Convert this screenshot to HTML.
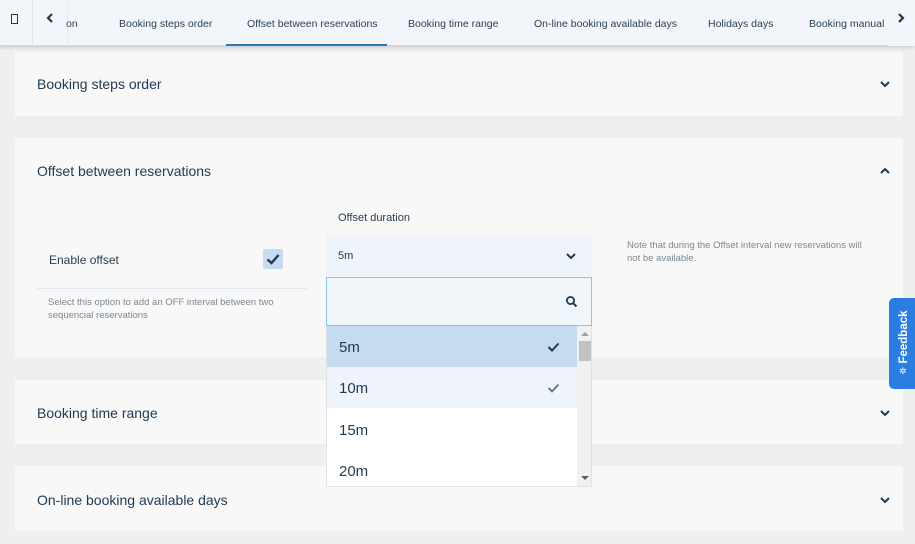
<!DOCTYPE html>
<html><head><style>
*{box-sizing:border-box;margin:0;padding:0}
body{width:915px;height:544px;overflow:hidden;background:#eeeff1;font-family:"Liberation Sans","DejaVu Sans",sans-serif;color:#1f3a52;position:relative}
.top{position:absolute;left:0;top:0;width:915px;height:46px;background:#f2f6fa;border-bottom:1px solid #cfd6dd;box-shadow:0 2px 3px rgba(0,0,0,.12)}
.tab{position:absolute;top:18px;font-size:10.5px;color:#2b3f52;white-space:nowrap}
.card{position:absolute;left:15px;width:888px;background:#f8f8f8}
.card h3{position:absolute;left:22px;font-weight:normal;font-size:14px;color:#1f3a52}
.chev{position:absolute;right:12px;width:12px;height:12px}
.dd{position:absolute;left:326px;width:266px}
.item{position:absolute;left:0;width:250px;height:41px;font-size:15px;padding:13px 0 0 12px;color:#1f3a52}
</style></head><body>
<div class="top">
 <div style="position:absolute;left:0;top:0;width:33px;height:46px;border-right:1px solid #e0e6ec"></div>
 <div style="position:absolute;left:11px;top:14px;width:7px;height:10px;border:1.5px solid #1f3a52"></div>
 <div style="position:absolute;left:33px;top:0;width:35px;height:46px;border-right:1px solid #e6ebf0"></div>
 <svg style="position:absolute;left:45px;top:12px" width="10" height="12"><path d="M7 2 L3 6 L7 10" stroke="#1f3a52" stroke-width="2.2" fill="none"/></svg>
 <div class="tab" style="left:66px">on</div>
 <div class="tab" style="left:119px">Booking steps order</div>
 <div class="tab" style="left:247px">Offset between reservations</div>
 <div style="position:absolute;left:226px;top:44px;width:161px;height:2px;background:#2a7ab8"></div>
 <div class="tab" style="left:408px">Booking time range</div>
 <div class="tab" style="left:534px">On-line booking available days</div>
 <div class="tab" style="left:708px">Holidays days</div>
 <div class="tab" style="left:809px;width:78px;overflow:hidden">Booking manual c</div>
 <div style="position:absolute;left:888px;top:0;width:27px;height:46px;background:#f2f6fa"></div>
 <svg style="position:absolute;left:896px;top:12px" width="10" height="12"><path d="M3 2 L7 6 L3 10" stroke="#1f3a52" stroke-width="2.2" fill="none"/></svg>
</div>

<div class="card" style="top:52px;height:64px"><h3 style="top:24px">Booking steps order</h3>
<svg class="chev" style="top:26px" viewBox="0 0 12 12"><path d="M2 4 L6 8 L10 4" stroke="#1f3a52" stroke-width="2" fill="none"/></svg></div>

<div class="card" style="top:138px;height:219px"><h3 style="top:25px">Offset between reservations</h3>
<svg class="chev" style="top:27px" viewBox="0 0 12 12"><path d="M2 8 L6 4 L10 8" stroke="#1f3a52" stroke-width="2" fill="none"/></svg>
<div style="position:absolute;left:34px;top:115px;font-size:12px;color:#2b3f52">Enable offset</div>
<div style="position:absolute;left:248px;top:111px;width:20px;height:20px;background:#c6dbef;border-radius:2px"></div>
<svg style="position:absolute;left:250px;top:113px" width="16" height="16"><path d="M2.5 8.5 L6.5 12 L13.5 4" stroke="#1f3a52" stroke-width="2.4" fill="none"/></svg>
<div style="position:absolute;left:22px;top:150px;width:270px;height:1px;background:#e3e6ea"></div>
<div style="position:absolute;left:33px;top:158px;font-size:9.5px;line-height:13px;color:#7a8894;width:260px">Select this option to add an OFF interval between two sequencial reservations</div>
<div style="position:absolute;left:323px;top:74px;font-size:11px;color:#2b3f52">Offset duration</div>
<div style="position:absolute;left:612px;top:101px;font-size:9.5px;line-height:13px;color:#7a8894;width:245px">Note that during the Offset interval new reservations will not be available.</div>
</div>

<div class="card" style="top:380px;height:64px"><h3 style="top:25px">Booking time range</h3>
<svg class="chev" style="top:27px" viewBox="0 0 12 12"><path d="M2 4 L6 8 L10 4" stroke="#1f3a52" stroke-width="2" fill="none"/></svg></div>
<div class="card" style="top:466px;height:65px"><h3 style="top:26px">On-line booking available days</h3>
<svg class="chev" style="top:28px" viewBox="0 0 12 12"><path d="M2 4 L6 8 L10 4" stroke="#1f3a52" stroke-width="2" fill="none"/></svg></div>

<div class="dd" style="top:235px;height:41px;background:#eef4fa"><div style="position:absolute;left:12px;top:15px;font-size:11px">5m</div>
<svg style="position:absolute;right:15px;top:15px" width="12" height="12"><path d="M2 4 L6 8 L10 4" stroke="#1f3a52" stroke-width="2" fill="none"/></svg></div>
<div class="dd" style="top:277px;height:49px;background:#f1f6fb;border:1px solid #8cc2e6">
<svg style="position:absolute;right:13px;top:17px" width="13" height="13"><circle cx="5.5" cy="5.5" r="3.6" stroke="#1f3a52" stroke-width="1.8" fill="none"/><path d="M8 8 L11.5 11.5" stroke="#1f3a52" stroke-width="2"/></svg></div>
<div class="dd" style="top:326px;height:161px;background:#fff;border:1px solid #dfe3e7;border-top:none;overflow:hidden">
 <div class="item" style="top:0;background:#c5dcf0">5m</div>
 <svg style="position:absolute;left:220px;top:15px" width="13" height="12"><path d="M1.5 6 L5 9.5 L11.5 2.5" stroke="#1f3a52" stroke-width="2" fill="none"/></svg>
 <div class="item" style="top:41px;background:#eef4fa">10m</div>
 <svg style="position:absolute;left:220px;top:56px" width="13" height="12"><path d="M1.5 6 L5 9.5 L11.5 2.5" stroke="#5d7488" stroke-width="1.8" fill="none"/></svg>
 <div class="item" style="top:83px">15m</div>
 <div class="item" style="top:124px">20m</div>
 <div style="position:absolute;left:250px;top:0;width:16px;height:161px;background:#f1f1f1"></div>
 <div style="position:absolute;left:252px;top:15px;width:12px;height:20px;background:#c1c1c1"></div>
 <div style="position:absolute;left:254px;top:6px;border:4px solid transparent;border-bottom:4px solid #a0a0a0;border-top:none"></div>
 <div style="position:absolute;left:254px;top:150px;border:4px solid transparent;border-top:4px solid #606060;border-bottom:none"></div>
</div>

<div style="position:absolute;left:889px;top:298px;width:30px;height:91px;background:#2a7de1;border-radius:5px 0 0 5px"></div>
<div style="position:absolute;left:904px;top:337px;transform:translate(-50%,-50%) rotate(-90deg);color:#fff;font-size:11.5px;font-weight:bold;white-space:nowrap">Feedback</div>
<div style="position:absolute;left:899px;top:367px;width:10px;height:9px;color:#fff;font-size:9px;line-height:9px">✲</div>
</body></html>
